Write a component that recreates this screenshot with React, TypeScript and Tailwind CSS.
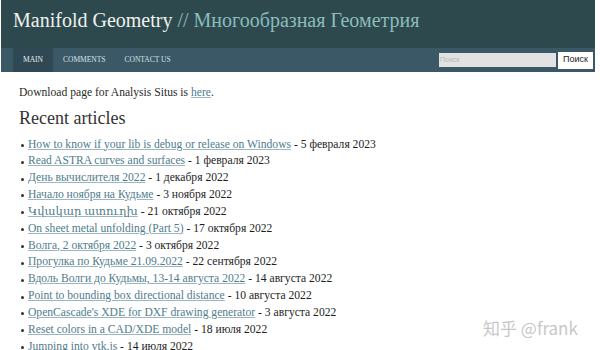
import React from "react";

const items: [string, string][] = [
  ["How to know if your lib is debug or release on Windows", "5 февраля 2023"],
  ["Read ASTRA curves and surfaces", "1 февраля 2023"],
  ["День вычислителя 2022", "1 декабря 2022"],
  ["Начало ноября на Кудьме", "3 ноября 2022"],
  ["Կվակար ատուղխ", "21 октября 2022"],
  ["On sheet metal unfolding (Part 5)", "17 октября 2022"],
  ["Волга, 2 октября 2022", "3 октября 2022"],
  ["Прогулка по Кудьме 21.09.2022", "22 сентября 2022"],
  ["Вдоль Волги до Кудьмы, 13-14 августа 2022", "14 августа 2022"],
  ["Point to bounding box directional distance", "10 августа 2022"],
  ["OpenCascade's XDE for DXF drawing generator", "3 августа 2022"],
  ["Reset colors in a CAD/XDE model", "18 июля 2022"],
  ["Jumping into vtk.js", "14 июля 2022"],
];

export default function App() {
  return (
    <div
      className="w-[600px] h-[350px] overflow-hidden bg-white relative"
      style={{ fontFamily: '"Liberation Serif", "DejaVu Serif", serif' }}
    >
      <div className="w-[594px] ml-[1px]">
        <div className="h-[48px] bg-[#2e494d] pl-[12px] pt-[8px]">
          <div className="text-[20px] leading-[24px] whitespace-nowrap">
            <span className="text-[#eef2ee]">Manifold Geometry</span>
            <span className="text-[#8cbcbc]"> // Многообразная Геометрия</span>
          </div>
        </div>
        <div className="h-[24px] bg-[#3a5866] flex items-stretch pl-[12px] pr-[2px]">
          <div className="px-[10px] bg-[#2f4853] text-[#e6ecee] text-[7.5px] flex items-center">MAIN</div>
          <div className="px-[9px] ml-[1px] text-[#d8e2e6] text-[7.5px] flex items-center">COMMENTS</div>
          <div className="px-[9px] ml-[1px] text-[#d8e2e6] text-[7.5px] flex items-center">CONTACT US</div>
          <div className="flex-1" />
          <div className="flex items-center gap-[2px]">
            <div
              className="w-[117px] h-[14px] bg-[#e2e2e2] text-[7px] text-[#b8b8b8] pl-[1px] leading-[14px]"
              style={{ fontFamily: '"Liberation Sans", sans-serif' }}
            >
              Поиск
            </div>
            <div
              className="w-[35px] h-[17px] bg-white text-[9px] text-[#222] flex items-center justify-center"
              style={{ fontFamily: '"Liberation Sans", sans-serif' }}
            >
              Поиск
            </div>
          </div>
        </div>
      </div>
      <div className="pl-[19px] pt-[13px] text-[#2a2a2a]">
        <div className="text-[11.6px] leading-[16px]">
          Download page for Analysis Situs is{" "}
          <span className="text-[#4f7c8c] underline decoration-[#9ab6c0]">here</span>.
        </div>
        <div className="text-[18px] leading-[22px] mt-[6px] text-[#333]">Recent articles</div>
        <ul className="mt-[7.5px] ml-[2px]">
          {items.map(([t, d], i) => (
            <li key={i} className="flex items-center text-[11.6px] leading-[16.85px] h-[16.85px] whitespace-nowrap">
              <span className="w-[3px] h-[3px] rounded-full bg-[#333] mr-[4px] mt-[1px]" />
              <span className="text-[#4f7c8c] underline decoration-[#9ab6c0]">{t}</span>
              <span className="text-[#1e1e1e]">&nbsp;- {d}</span>
            </li>
          ))}
        </ul>
      </div>
      <div
        className="absolute left-[483px] top-[315px] text-[17px] text-[#c8c8c8]"
        style={{ fontFamily: '"Noto Sans CJK SC", "Liberation Sans", sans-serif' }}
      >
        知乎 @frank
      </div>
    </div>
  );
}
